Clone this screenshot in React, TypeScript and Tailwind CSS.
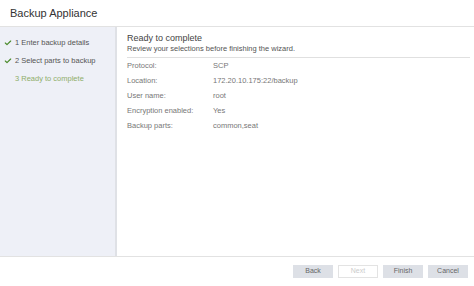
import { Check } from "lucide-react";

const steps = [
  { n: 1, label: "Enter backup details", done: true },
  { n: 2, label: "Select parts to backup", done: true },
  { n: 3, label: "Ready to complete", done: false },
];

const rows: [string, string][] = [
  ["Protocol:", "SCP"],
  ["Location:", "172.20.10.175:22/backup"],
  ["User name:", "root"],
  ["Encryption enabled:", "Yes"],
  ["Backup parts:", "common,seat"],
];

export default function App() {
  return (
    <div className="w-[474px] h-[286px] bg-white flex flex-col text-[#555] overflow-hidden" style={{ fontFamily: "'Liberation Sans', Arial, sans-serif" }}>
      <div className="h-[27px] shrink-0 flex items-center pl-[10px] text-[11px] text-[#333] border-b border-[#e2e2e2]">
        Backup Appliance
      </div>
      <div className="flex flex-1 min-h-0">
        <div className="w-[117px] shrink-0 bg-[#eef0f7] border-r-2 border-[#dfe1e6] pt-[7px]">
          {steps.map((s) => (
            <div key={s.n} className="flex items-center h-[18px] pl-[4px] text-[7.5px]">
              <span className="w-[11px] flex items-center">
                {s.done && <Check size={8} strokeWidth={3.5} className="text-[#4a8a2a]" />}
              </span>
              <span className={s.done ? "text-[#555]" : "text-[#8fae6a]"}>
                {s.n} {s.label}
              </span>
            </div>
          ))}
        </div>
        <div className="flex-1 pl-[10px] pr-[4px] pt-[6px]">
          <div className="text-[9px] text-[#444] leading-[11px]">Ready to complete</div>
          <div className="text-[7.5px] text-[#555] leading-[9px]">Review your selections before finishing the wizard.</div>
          <div className="h-px bg-[#e0e0e0] mt-[4px]" />
          <div className="flex flex-col">
            {rows.map(([k, v]) => (
              <div key={k} className="flex h-[15px] items-center text-[7.5px] text-[#777]">
                <span className="w-[86px]">{k}</span>
                <span>{v}</span>
              </div>
            ))}
          </div>
        </div>
      </div>
      <div className="h-[30px] shrink-0 border-t border-[#e2e2e2] flex items-center justify-end gap-[5px] pr-[6px]">
        <button className="w-[40px] h-[13px] bg-[#dde0e6] text-[7px] text-[#666]">Back</button>
        <button className="w-[40px] h-[13px] bg-white border border-[#e3e3e3] text-[7px] text-[#ccc]">Next</button>
        <button className="w-[40px] h-[13px] bg-[#dde0e6] text-[7px] text-[#666]">Finish</button>
        <button className="w-[40px] h-[13px] bg-[#dde0e6] text-[7px] text-[#666]">Cancel</button>
      </div>
    </div>
  );
}
